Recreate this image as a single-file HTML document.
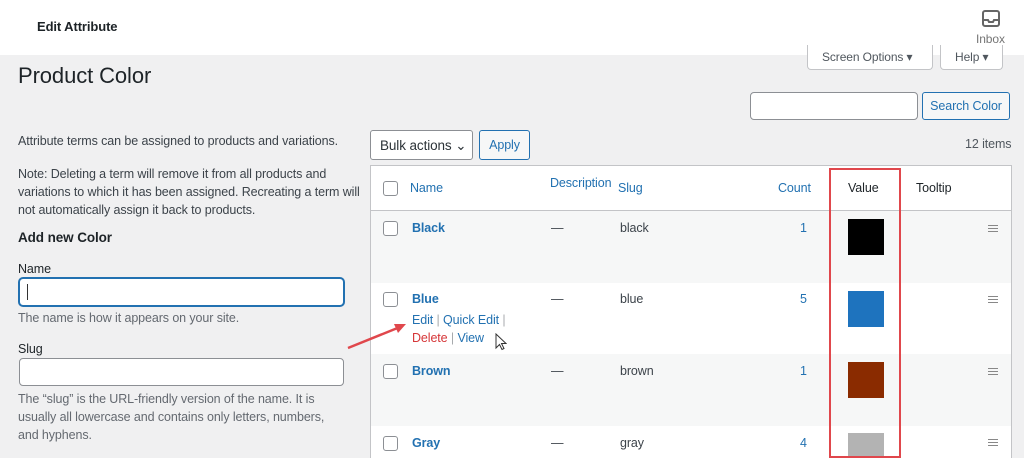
<!DOCTYPE html>
<html><head><meta charset="utf-8"><style>
*{margin:0;padding:0;box-sizing:border-box}
html,body{width:1024px;height:458px;overflow:hidden}
body{background:#f0f0f1;font-family:"Liberation Sans",sans-serif;font-size:12.5px;color:#3c434a;position:relative;letter-spacing:-0.1px}
.a{position:absolute;white-space:nowrap}
.lnk{color:#2271b1}
.cb{position:absolute;width:15px;height:15px;border:1px solid #8c8f94;border-radius:3px;background:#fff}
.sw{position:absolute;left:848px;width:36px;height:36px}
.hd{position:absolute;left:988px;width:10px;height:7px;border-top:1px solid #888;border-bottom:1px solid #888}
.hd:after{content:"";position:absolute;left:0;right:0;top:2px;border-top:1px solid #888}
.btn{position:absolute;border:1px solid #c3c4c7;border-radius:3px;background:#fff}
</style></head><body>
<div class="a" style="left:0;top:0;width:1024px;height:55px;background:#fff"></div>
<div class="a" style="left:37px;top:19px;font-size:13px;font-weight:bold;color:#1d2327">Edit Attribute</div>
<svg class="a" style="left:981px;top:9px" width="20" height="19" viewBox="0 0 20 19"><rect x="2" y="2" width="16" height="15" rx="2" fill="none" stroke="#666" stroke-width="2"/><path d="M2 11h5l1 2h4l1-2h5" fill="none" stroke="#666" stroke-width="2"/></svg>
<div class="a" style="left:976px;top:32px;font-size:12px;color:#757575">Inbox</div>
<div class="btn" style="left:807px;top:45px;width:126px;height:25px;border-top:none;border-radius:0 0 4px 4px;z-index:0"></div>
<div class="a" style="left:822px;top:50px;font-size:12px;color:#50575e">Screen Options ▾</div>
<div class="btn" style="left:940px;top:45px;width:63px;height:25px;border-top:none;border-radius:0 0 4px 4px"></div>
<div class="a" style="left:955px;top:50px;font-size:12px;color:#50575e">Help ▾</div>
<div class="a" style="left:18px;top:63px;font-size:22px;color:#1d2327">Product Color</div>
<div class="btn" style="left:750px;top:92px;width:168px;height:28px;border-color:#8c8f94;border-radius:4px"></div>
<div class="btn" style="left:922px;top:92px;width:88px;height:28px;border-color:#2271b1;background:#f6f7f7;color:#2271b1;font-size:12.5px;line-height:26px;text-align:center">Search Color</div>
<div class="a" style="left:18px;top:134px">Attribute terms can be assigned to products and variations.</div>
<div class="a" style="left:18px;top:165px;line-height:18px;white-space:normal;width:345px">Note: Deleting a term will remove it from all products and variations to which it has been assigned. Recreating a term will not automatically assign it back to products.</div>
<div class="a" style="left:18px;top:230px;font-size:13.5px;font-weight:bold;color:#1d2327">Add new Color</div>
<div class="a" style="left:18px;top:262px;color:#1d2327">Name</div>
<div class="a" style="left:19px;top:278px;width:325px;height:28px;background:#fff;border:1px solid #2271b1;border-radius:4px;box-shadow:0 0 0 1px #2271b1"></div>
<div class="a" style="left:27px;top:284px;width:1px;height:16px;background:#333"></div>
<div class="a" style="left:18px;top:311px;color:#646970">The name is how it appears on your site.</div>
<div class="a" style="left:18px;top:342px;color:#1d2327">Slug</div>
<div class="a" style="left:19px;top:358px;width:325px;height:28px;background:#fff;border:1px solid #8c8f94;border-radius:4px"></div>
<div class="a" style="left:18px;top:390px;line-height:18px;white-space:normal;width:322px;color:#646970">The “slug” is the URL-friendly version of the name. It is usually all lowercase and contains only letters, numbers, and hyphens.</div>
<div class="btn" style="left:370px;top:130px;width:103px;height:30px;border-color:#8c8f94;border-radius:3px"></div>
<div class="a" style="left:380px;top:138px;font-size:13.5px;color:#2c3338">Bulk actions ⌄</div>
<div class="btn" style="left:479px;top:130px;width:51px;height:30px;border-color:#2271b1;background:#f6f7f7;color:#2271b1;font-size:12.5px;line-height:28px;text-align:center">Apply</div>
<div class="a" style="left:965px;top:137px;color:#50575e">12 items</div>
<div class="a" style="left:370px;top:165px;width:642px;height:300px;background:#fff;border:1px solid #c3c4c7"></div>
<div class="a" style="left:371px;top:210px;width:640px;height:1px;background:#c3c4c7"></div>
<div class="a" style="left:371px;top:211px;width:640px;height:72px;background:#f6f7f7"></div>
<div class="a" style="left:371px;top:354px;width:640px;height:72px;background:#f6f7f7"></div>
<div class="cb" style="left:383px;top:181px"></div>
<div class="a lnk" style="left:410px;top:181px">Name</div>
<div class="a lnk" style="left:550px;top:176px;width:62px;overflow:hidden">Description</div>
<div class="a lnk" style="left:618px;top:181px">Slug</div>
<div class="a lnk" style="left:778px;top:181px">Count</div>
<div class="a" style="left:848px;top:181px;color:#1d2327">Value</div>
<div class="a" style="left:916px;top:181px;color:#1d2327">Tooltip</div>
<div class="cb" style="left:383px;top:221px"></div>
<div class="a lnk" style="left:412px;top:221px;font-weight:bold">Black</div>
<div class="a" style="left:551px;top:221px">—</div>
<div class="a" style="left:620px;top:221px">black</div>
<div class="a lnk" style="left:800px;top:221px">1</div>
<div class="sw" style="top:219px;background:#000"></div>
<div class="hd" style="left:988px;top:225px"></div>
<div class="cb" style="left:383px;top:292px"></div>
<div class="a lnk" style="left:412px;top:292px;font-weight:bold">Blue</div>
<div class="a" style="left:412px;top:313px"><span class="lnk">Edit</span> <span style="color:#a7aaad">|</span> <span class="lnk">Quick Edit</span> <span style="color:#a7aaad">|</span></div>
<div class="a" style="left:412px;top:331px"><span style="color:#d63638">Delete</span> <span style="color:#a7aaad">|</span> <span class="lnk">View</span></div>
<svg class="a" style="left:495px;top:333px" width="12" height="18" viewBox="0 0 12 18"><path d="M1 1v14l3.5-3.5 2.5 5 2-1-2.5-5H11z" fill="#fff" stroke="#333" stroke-width="1"/></svg>
<div class="a" style="left:551px;top:292px">—</div>
<div class="a" style="left:620px;top:292px">blue</div>
<div class="a lnk" style="left:800px;top:292px">5</div>
<div class="sw" style="top:291px;background:#1e73be"></div>
<div class="hd" style="left:988px;top:296px"></div>
<div class="cb" style="left:383px;top:364px"></div>
<div class="a lnk" style="left:412px;top:364px;font-weight:bold">Brown</div>
<div class="a" style="left:551px;top:364px">—</div>
<div class="a" style="left:620px;top:364px">brown</div>
<div class="a lnk" style="left:800px;top:364px">1</div>
<div class="sw" style="top:362px;background:#8a2b00"></div>
<div class="hd" style="left:988px;top:368px"></div>
<div class="cb" style="left:383px;top:436px"></div>
<div class="a lnk" style="left:412px;top:436px;font-weight:bold">Gray</div>
<div class="a" style="left:551px;top:436px">—</div>
<div class="a" style="left:620px;top:436px">gray</div>
<div class="a lnk" style="left:800px;top:436px">4</div>
<div class="sw" style="top:433px;height:25px;background:#b3b3b3"></div>
<div class="hd" style="left:988px;top:439px"></div>
<div class="a" style="left:829px;top:168px;width:72px;height:290px;border:2px solid #e0474c"></div>
<svg class="a" style="left:340px;top:318px" width="70" height="36" viewBox="0 0 70 36"><path d="M8 30L60 9" stroke="#e0474c" stroke-width="2.5"/><path d="M66 6l-12 0 4 9z" fill="#e0474c"/></svg>
</body></html>
